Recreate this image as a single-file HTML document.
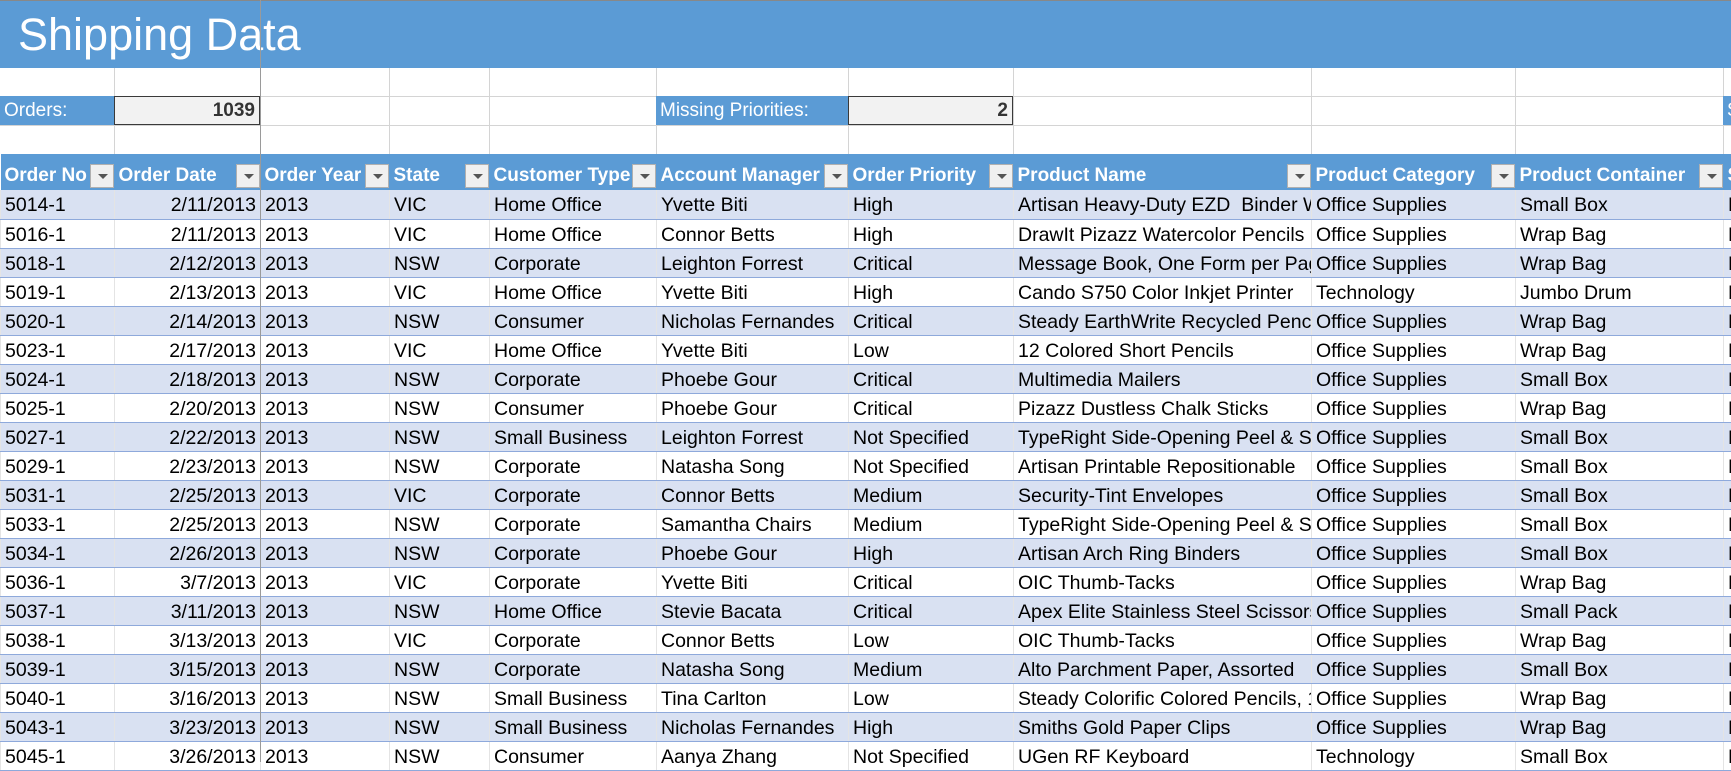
<!DOCTYPE html>
<html><head><meta charset="utf-8"><style>
*{margin:0;padding:0;box-sizing:border-box}
body{width:1731px;height:762px;overflow:hidden;background:#fff;font-family:"Liberation Sans",sans-serif;position:relative}
.title{position:absolute;left:0;top:0;width:1731px;height:68px;background:#5b9bd5;color:#fff;font-size:45px;padding:8px 0 0 18px;border-top:1px solid #888;white-space:nowrap}
.c{position:absolute;font-size:19px;white-space:nowrap;overflow:hidden;line-height:29px;padding:0 4px}
.vl{position:absolute;width:1px;background:#d4d4d4}
.hl{position:absolute;height:1px;background:#d4d4d4;left:0;width:1731px}
table{position:absolute;top:154px;left:0;border-collapse:collapse;table-layout:fixed;width:1731px}
td,th{white-space:nowrap;overflow:hidden;font-size:19.5px;padding:0 4px;text-align:left;position:relative}
th{background:#5b9bd5;color:#fff;height:36px;font-weight:bold;padding-top:8px;font-size:19px}
td{height:29px;border-bottom:1px solid #8ea9db;border-left:1px solid #e4e4e4;padding-top:3px}
tr:nth-child(even) td{background:#d9e1f2}
.fb{position:absolute;right:1px;bottom:2px;width:24px;height:24px;background:#f0f0f0;border:1px solid #b0b0b0}
.fb:after{content:"";position:absolute;left:7px;top:9px;border-left:5px solid transparent;border-right:5px solid transparent;border-top:5px solid #555}
.r{text-align:right}
</style></head><body>
<div class="title">Shipping Data</div>
<div class="hl" style="top:96px"></div><div class="hl" style="top:125px"></div>
<div class="vl" style="left:114px;top:68px;height:86px"></div>
<div class="vl" style="left:389px;top:68px;height:86px"></div>
<div class="vl" style="left:489px;top:68px;height:86px"></div>
<div class="vl" style="left:656px;top:68px;height:86px"></div>
<div class="vl" style="left:848px;top:68px;height:86px"></div>
<div class="vl" style="left:1013px;top:68px;height:86px"></div>
<div class="vl" style="left:1311px;top:68px;height:86px"></div>
<div class="vl" style="left:1515px;top:68px;height:86px"></div>
<div class="vl" style="left:1723px;top:68px;height:86px"></div>
<div class="c" style="left:0;top:96px;width:114px;height:29px;background:#5b9bd5;color:#fff">Orders:</div>
<div class="c" style="left:114px;top:96px;width:146px;height:29px;background:#f2f2f2;border:1px solid #3a3a3a;font-weight:bold;text-align:right;color:#333;line-height:27px">1039</div>
<div class="c" style="left:656px;top:96px;width:192px;height:29px;background:#5b9bd5;color:#fff">Missing Priorities:</div>
<div class="c" style="left:848px;top:96px;width:165px;height:29px;background:#f2f2f2;border:1px solid #3a3a3a;font-weight:bold;text-align:right;color:#333;line-height:27px">2</div>
<div class="c" style="left:1723px;top:96px;width:8px;height:29px;background:#5b9bd5;color:#fff">S</div>
<table>
<colgroup><col style="width:114px"><col style="width:146px"><col style="width:129px"><col style="width:100px"><col style="width:167px"><col style="width:192px"><col style="width:165px"><col style="width:298px"><col style="width:204px"><col style="width:208px"><col style="width:8px"></colgroup>
<tr><th>Order No<span class="fb"></span></th><th>Order Date<span class="fb"></span></th><th>Order Year<span class="fb"></span></th><th>State<span class="fb"></span></th><th>Customer Type<span class="fb"></span></th><th>Account Manager<span class="fb"></span></th><th>Order Priority<span class="fb"></span></th><th>Product Name<span class="fb"></span></th><th>Product Category<span class="fb"></span></th><th>Product Container<span class="fb"></span></th><th>S</th></tr>
<tr><td>5014-1</td><td class="r">2/11/2013</td><td>2013</td><td>VIC</td><td>Home Office</td><td>Yvette Biti</td><td>High</td><td>Artisan Heavy-Duty EZD&nbsp; Binder With</td><td>Office Supplies</td><td>Small Box</td><td>F</td></tr>
<tr><td>5016-1</td><td class="r">2/11/2013</td><td>2013</td><td>VIC</td><td>Home Office</td><td>Connor Betts</td><td>High</td><td>DrawIt Pizazz Watercolor Pencils</td><td>Office Supplies</td><td>Wrap Bag</td><td>F</td></tr>
<tr><td>5018-1</td><td class="r">2/12/2013</td><td>2013</td><td>NSW</td><td>Corporate</td><td>Leighton Forrest</td><td>Critical</td><td>Message Book, One Form per Page</td><td>Office Supplies</td><td>Wrap Bag</td><td>E</td></tr>
<tr><td>5019-1</td><td class="r">2/13/2013</td><td>2013</td><td>VIC</td><td>Home Office</td><td>Yvette Biti</td><td>High</td><td>Cando S750 Color Inkjet Printer</td><td>Technology</td><td>Jumbo Drum</td><td>D</td></tr>
<tr><td>5020-1</td><td class="r">2/14/2013</td><td>2013</td><td>NSW</td><td>Consumer</td><td>Nicholas Fernandes</td><td>Critical</td><td>Steady EarthWrite Recycled Pencils</td><td>Office Supplies</td><td>Wrap Bag</td><td>F</td></tr>
<tr><td>5023-1</td><td class="r">2/17/2013</td><td>2013</td><td>VIC</td><td>Home Office</td><td>Yvette Biti</td><td>Low</td><td>12 Colored Short Pencils</td><td>Office Supplies</td><td>Wrap Bag</td><td>F</td></tr>
<tr><td>5024-1</td><td class="r">2/18/2013</td><td>2013</td><td>NSW</td><td>Corporate</td><td>Phoebe Gour</td><td>Critical</td><td>Multimedia Mailers</td><td>Office Supplies</td><td>Small Box</td><td>F</td></tr>
<tr><td>5025-1</td><td class="r">2/20/2013</td><td>2013</td><td>NSW</td><td>Consumer</td><td>Phoebe Gour</td><td>Critical</td><td>Pizazz Dustless Chalk Sticks</td><td>Office Supplies</td><td>Wrap Bag</td><td>F</td></tr>
<tr><td>5027-1</td><td class="r">2/22/2013</td><td>2013</td><td>NSW</td><td>Small Business</td><td>Leighton Forrest</td><td>Not Specified</td><td>TypeRight Side-Opening Peel &amp; Seal</td><td>Office Supplies</td><td>Small Box</td><td>F</td></tr>
<tr><td>5029-1</td><td class="r">2/23/2013</td><td>2013</td><td>NSW</td><td>Corporate</td><td>Natasha Song</td><td>Not Specified</td><td>Artisan Printable Repositionable</td><td>Office Supplies</td><td>Small Box</td><td>F</td></tr>
<tr><td>5031-1</td><td class="r">2/25/2013</td><td>2013</td><td>VIC</td><td>Corporate</td><td>Connor Betts</td><td>Medium</td><td>Security-Tint Envelopes</td><td>Office Supplies</td><td>Small Box</td><td>F</td></tr>
<tr><td>5033-1</td><td class="r">2/25/2013</td><td>2013</td><td>NSW</td><td>Corporate</td><td>Samantha Chairs</td><td>Medium</td><td>TypeRight Side-Opening Peel &amp; Seal</td><td>Office Supplies</td><td>Small Box</td><td>F</td></tr>
<tr><td>5034-1</td><td class="r">2/26/2013</td><td>2013</td><td>NSW</td><td>Corporate</td><td>Phoebe Gour</td><td>High</td><td>Artisan Arch Ring Binders</td><td>Office Supplies</td><td>Small Box</td><td>F</td></tr>
<tr><td>5036-1</td><td class="r">3/7/2013</td><td>2013</td><td>VIC</td><td>Corporate</td><td>Yvette Biti</td><td>Critical</td><td>OIC Thumb-Tacks</td><td>Office Supplies</td><td>Wrap Bag</td><td>F</td></tr>
<tr><td>5037-1</td><td class="r">3/11/2013</td><td>2013</td><td>NSW</td><td>Home Office</td><td>Stevie Bacata</td><td>Critical</td><td>Apex Elite Stainless Steel Scissors</td><td>Office Supplies</td><td>Small Pack</td><td>F</td></tr>
<tr><td>5038-1</td><td class="r">3/13/2013</td><td>2013</td><td>VIC</td><td>Corporate</td><td>Connor Betts</td><td>Low</td><td>OIC Thumb-Tacks</td><td>Office Supplies</td><td>Wrap Bag</td><td>F</td></tr>
<tr><td>5039-1</td><td class="r">3/15/2013</td><td>2013</td><td>NSW</td><td>Corporate</td><td>Natasha Song</td><td>Medium</td><td>Alto Parchment Paper, Assorted</td><td>Office Supplies</td><td>Small Box</td><td>F</td></tr>
<tr><td>5040-1</td><td class="r">3/16/2013</td><td>2013</td><td>NSW</td><td>Small Business</td><td>Tina Carlton</td><td>Low</td><td>Steady Colorific Colored Pencils, 12</td><td>Office Supplies</td><td>Wrap Bag</td><td>F</td></tr>
<tr><td>5043-1</td><td class="r">3/23/2013</td><td>2013</td><td>NSW</td><td>Small Business</td><td>Nicholas Fernandes</td><td>High</td><td>Smiths Gold Paper Clips</td><td>Office Supplies</td><td>Wrap Bag</td><td>F</td></tr>
<tr><td>5045-1</td><td class="r">3/26/2013</td><td>2013</td><td>NSW</td><td>Consumer</td><td>Aanya Zhang</td><td>Not Specified</td><td>UGen RF Keyboard</td><td>Technology</td><td>Small Box</td><td>F</td></tr>
</table>
<div class="vl" style="left:260px;top:0;height:762px;background:#9a9a9a"></div>
</body></html>
